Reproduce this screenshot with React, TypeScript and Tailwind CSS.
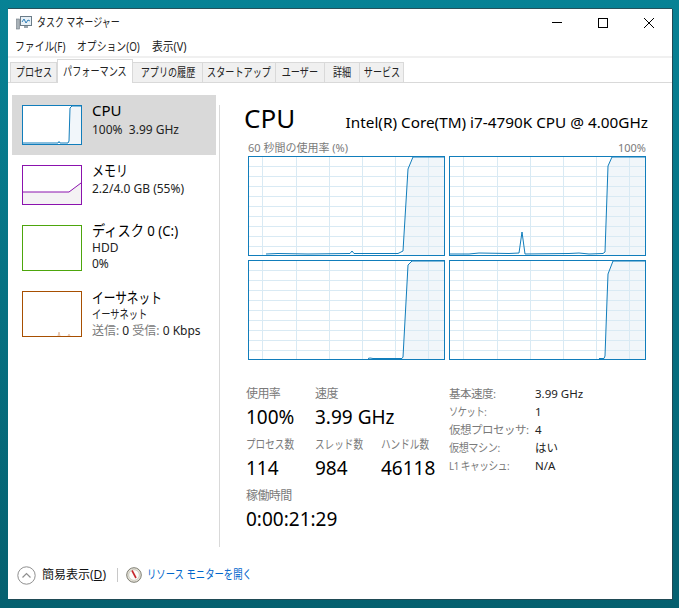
import { ReactNode } from 'react'

const font = { fontFamily: '"Noto Sans", "Noto Sans CJK JP", sans-serif' }

const tabs = [
  { label: 'プロセス', w: 'w-[47px]' },
  { label: 'パフォーマンス', w: 'w-[76px]', active: true },
  { label: 'アプリの履歴', w: 'w-[70px]' },
  { label: 'スタートアップ', w: 'w-[73px]' },
  { label: 'ユーザー', w: 'w-[49px]' },
  { label: '詳細', w: 'w-[35px]' },
  { label: 'サービス', w: 'w-[44px]' },
]

const specs = [
  ['基本速度:', '3.99 GHz', ''],
  ['ソケット:', '1', 'scale-x-[0.8]'],
  ['仮想プロセッサ:', '4', ''],
  ['仮想マシン:', 'はい', 'scale-x-[0.88]'],
  ['L1 キャッシュ:', 'N/A', 'scale-x-[0.84]'],
]

const hLines = [10, 20, 30, 40, 50, 60, 70, 80, 90]
const vLines = [14, 48, 81, 114, 147, 180]

// kana in the original UI font is much narrower than Noto's
function Narrow({ children, className = 'scale-x-[0.8]' }: { children: ReactNode; className?: string }) {
  return <span className={`inline-block origin-left whitespace-nowrap ${className}`}>{children}</span>
}

function CpuGraph({ line, fill }: { line: string; fill: string }) {
  return (
    <svg width="197" height="100" viewBox="0 0 197 100" className="block">
      <rect x="0.5" y="0.5" width="196" height="99" fill="#ffffff" />
      <polygon points={fill} fill="#f1f6fa" />
      {hLines.map(y => <line key={y} x1="1" x2="196" y1={y + 0.5} y2={y + 0.5} stroke="#d9eaf4" />)}
      {vLines.map(x => <line key={x} x1={x + 0.5} x2={x + 0.5} y1="1" y2="99" stroke="#d9eaf4" />)}
      <polyline points={line} fill="none" stroke="#117dbb" strokeWidth="1" />
      <rect x="0.5" y="0.5" width="196" height="99" fill="none" stroke="#117dbb" />
    </svg>
  )
}

function Thumb({ color, h, children }: { color: string; h: number; children?: ReactNode }) {
  return (
    <svg width="60" height={h} viewBox={`0 0 60 ${h}`} className="block shrink-0">
      <rect x="0.5" y="0.5" width="59" height={h - 1} fill="#ffffff" />
      {children}
      <rect x="0.5" y="0.5" width="59" height={h - 1} fill="none" stroke={color} />
    </svg>
  )
}

function Stat({ label, value, w, narrow }: { label: string; value: string; w: string; narrow?: boolean }) {
  return (
    <div className={w}>
      <div className="text-[12px] leading-[16px] text-[#7a7a7a]">
        {narrow ? <Narrow className="scale-x-[0.8]">{label}</Narrow> : <span className="tracking-[-0.6px]">{label}</span>}
      </div>
      <div className="text-[19px] leading-[26px] mt-[2px] text-black whitespace-nowrap">{value}</div>
    </div>
  )
}

export default function App() {
  return (
    <div
      style={font}
      className="w-[679px] h-[608px] overflow-hidden pl-2 pt-2 bg-gradient-to-b from-[#078295] to-[#05606f]"
    >
      <div className="w-[664px] h-[591px] bg-white flex flex-col border-t border-[#27505a] shadow-[1px_1px_0_#1f4a55]">
        {/* Title bar */}
        <div className="h-[29px] flex items-center shrink-0">
          <svg width="16" height="15" viewBox="0 0 16 15" className="ml-2 shrink-0 mb-[2px]">
            <rect x="4.5" y="1.5" width="11" height="9" fill="#e8f1f7" stroke="#6b7c88" />
            <polyline points="6,7 8,4 10,8 12,5 14,6" fill="none" stroke="#2f7fb8" />
            <rect x="8" y="11" width="4" height="2" fill="#9aa5ad" />
            <rect x="0.5" y="4" width="3" height="10" fill="#a9b2b8" stroke="#6e7a82" strokeWidth="0.6" />
          </svg>
          <span className="ml-[5px] text-[12px] text-[#222] mb-[2px]">
            <Narrow className="scale-x-[0.75]">タスク マネージャー</Narrow>
          </span>
          <div className="ml-auto flex items-center mb-[2px]">
            <div className="w-[46px] flex justify-center"><div className="w-[10px] h-px bg-black" /></div>
            <div className="w-[46px] flex justify-center"><div className="w-[10px] h-[10px] border border-black" /></div>
            <div className="w-[46px] flex justify-center">
              <svg width="10" height="10" viewBox="0 0 10 10"><path d="M0 0L10 10M10 0L0 10" stroke="#000" strokeWidth="1" /></svg>
            </div>
          </div>
        </div>

        {/* Menu */}
        <div className="h-[18px] flex items-center text-[12px] text-[#222] shrink-0 pl-[7px]">
          <span className="w-[62px]"><Narrow className="scale-x-[0.82]">ファイル(F)</Narrow></span>
          <span className="w-[75px]"><Narrow className="scale-x-[0.82]">オプション(O)</Narrow></span>
          <span><Narrow className="scale-x-[0.9]">表示(V)</Narrow></span>
        </div>
        <div className="h-[2px] bg-[#f0f0f0] shrink-0" />

        {/* Tabs */}
        <div className="h-[25px] flex items-end pl-[2px] border-b border-[#d9d9d9] shrink-0 text-[12px] text-[#222]">
          {tabs.map(t =>
            t.active ? (
              <div key={t.label} className={`${t.w} h-[24px] -mb-px bg-white border border-b-0 border-[#d9d9d9] flex items-center justify-center`}>
                <span className="inline-block scale-x-[0.76] whitespace-nowrap">{t.label}</span>
              </div>
            ) : (
              <div key={t.label} className={`${t.w} h-[20px] bg-[#f0f0f0] border border-b-0 border-l-0 first:border-l border-[#d9d9d9] flex items-center justify-center`}>
                <span className="inline-block scale-x-[0.76] whitespace-nowrap">{t.label}</span>
              </div>
            )
          )}
        </div>

        {/* Body */}
        <div className="flex flex-1 pt-3 min-h-0">
          {/* Sidebar */}
          <div className="w-[211px] pl-1 shrink-0">
            <div className="w-[204px] h-[60px] bg-[#d9d9d9] flex pl-[10px] pt-[10px]">
              <Thumb color="#117dbb" h={40}>
                <polygon points="47,39 48,3 59,1 59,39" fill="#f1f6fa" />
                <polyline points="1,38 36,38 37,36.5 38,38 46,38 47,36 48,3 50,1 59,1" fill="none" stroke="#117dbb" />
              </Thumb>
              <div className="ml-[10px] -mt-[5px]">
                <div className="text-[15px] leading-[20px] text-black">CPU</div>
                <div className="text-[12px] leading-[16px] mt-[2px] text-[#222] whitespace-nowrap">100%&nbsp; 3.99 GHz</div>
              </div>
            </div>
            <div className="h-[60px] flex pl-[10px] pt-[10px]">
              <Thumb color="#8b12ae" h={40}>
                <polygon points="1,27 47,27 59,18 59,39 1,39" fill="#f4f2f4" />
                <polyline points="1,27 47,27 59,18" fill="none" stroke="#8b12ae" />
              </Thumb>
              <div className="ml-[10px] -mt-[5px]">
                <div className="text-[15px] leading-[20px] text-black"><Narrow>メモリ</Narrow></div>
                <div className="text-[12px] leading-[16px] mt-px text-[#222] whitespace-nowrap">2.2/4.0 GB (55%)</div>
              </div>
            </div>
            <div className="h-[66px] flex pl-[10px] pt-[10px]">
              <Thumb color="#4da60c" h={46} />
              <div className="ml-[10px] -mt-[5px]">
                <div className="text-[15px] leading-[20px] text-black"><Narrow className="scale-x-[0.88]">ディスク 0 (C:)</Narrow></div>
                <div className="text-[12px] leading-[16px] text-[#222]">HDD</div>
                <div className="text-[12px] leading-[16px] text-[#222]">0%</div>
              </div>
            </div>
            <div className="h-[66px] flex pl-[10px] pt-[10px]">
              <Thumb color="#a74f01" h={46}>
                <polyline points="36,45 37,41 38,45" fill="#f3dccb" stroke="#e7c4ab" />
                <polyline points="46,45 47,43 48,45" fill="#f3dccb" stroke="#e7c4ab" />
              </Thumb>
              <div className="ml-[10px] -mt-[4px]">
                <div className="text-[15px] leading-[20px] text-black"><Narrow className="scale-x-[0.78]">イーサネット</Narrow></div>
                <div className="text-[12px] leading-[16px] text-[#222]"><Narrow className="scale-x-[0.77]">イーサネット</Narrow></div>
                <div className="text-[12px] leading-[16px] text-[#7a7a7a] whitespace-nowrap">
                  送信: <span className="text-[#222]">0</span> 受信: <span className="text-[#222]">0 Kbps</span>
                </div>
              </div>
            </div>
          </div>

          {/* Detail pane */}
          <div className="flex-1 h-[442px] mt-[10px] border-l border-[#d9d9d9] pl-[25px] pr-[24px] min-w-0">
            <div className="flex items-end justify-between h-[26px]">
              <span className="text-[26px] leading-[26px] text-black -ml-px">CPU</span>
              <span className="text-[15.3px] leading-[20px] text-black whitespace-nowrap -mb-px">Intel(R) Core(TM) i7-4790K CPU @ 4.00GHz</span>
            </div>
            <div className="flex justify-between text-[11px] leading-[14px] text-[#7a7a7a] mt-[10px] pl-[3px] pr-[2px]">
              <span>60 秒間の使用率 (%)</span>
              <span>100%</span>
            </div>
            <div className="grid grid-cols-[197px_197px] gap-[4px] mt-px ml-[3px]">
              <CpuGraph
                fill="155,99 160,13 166,1 196,1 196,99"
                line="18,98 30,97.5 60,98 102,97.5 104,95 106,97.5 150,97.5 155,95 160,13 165,1 196,1"
              />
              <CpuGraph
                fill="156,99 159,10 163,1 196,1 196,99"
                line="1,98 20,98 30,97 60,97.5 70,97 73,76 76,98 120,97.5 130,97 140,98 154,97.5 156,96 159,10 163,1 196,1"
              />
              <CpuGraph
                fill="155,99 160,5 164,1 196,1 196,99"
                line="120,98.5 122,98 125,98.5 154,98.5 155,97 160,5 164,1 196,1"
              />
              <CpuGraph
                fill="156,99 159,14 164,1 196,1 196,99"
                line="150,98.5 155,98.5 156,96 158,40 159,14 164,1 196,1"
              />
            </div>

            <div className="flex mt-[26px] ml-px">
              <div className="w-[203px]">
                <div className="flex">
                  <Stat label="使用率" value="100%" w="w-[69px]" />
                  <Stat label="速度" value="3.99 GHz" w="w-[120px]" />
                </div>
                <div className="flex mt-[7px]">
                  <Stat label="プロセス数" value="114" w="w-[69px]" narrow />
                  <Stat label="スレッド数" value="984" w="w-[66px]" narrow />
                  <Stat label="ハンドル数" value="46118" w="w-[60px]" narrow />
                </div>
                <div className="mt-[7px]">
                  <Stat label="稼働時間" value="0:00:21:29" w="w-[120px]" />
                </div>
              </div>
              <div className="grid grid-cols-[86px_auto] auto-rows-[18px] text-[11.5px] items-center -mt-px h-fit">
                {specs.map(([k, v, scale]) => (
                  <div key={k} className="contents">
                    <span className="text-[#7a7a7a] whitespace-nowrap tracking-[-0.5px]">
                      <Narrow className={scale}>{k}</Narrow>
                    </span>
                    <span className="text-[#222] whitespace-nowrap">{v}</span>
                  </div>
                ))}
              </div>
            </div>
          </div>
        </div>

        {/* Footer */}
        <div className="h-[52px] flex items-center pl-[9px] pt-[4px] shrink-0 text-[12px]">
          <svg width="19" height="19" viewBox="0 0 19 19" className="shrink-0">
            <circle cx="9.5" cy="9.5" r="8.7" fill="#fff" stroke="#8f8f8f" />
            <path d="M5.5 11.5L9.5 7.5L13.5 11.5" fill="none" stroke="#8f8f8f" strokeWidth="1.2" />
          </svg>
          <span className="ml-[6px] w-[72px] text-[#111] whitespace-nowrap">簡易表示(<span className="underline">D</span>)</span>
          <div className="w-px h-[14px] bg-[#c8c8c8] ml-[3px]" />
          <svg width="16" height="16" viewBox="0 0 16 16" className="ml-2 shrink-0">
            <circle cx="8" cy="8" r="7.3" fill="#e6e2d8" stroke="#7d7d72" />
            <circle cx="8" cy="8" r="5.3" fill="#fbfbf8" stroke="#b5b5aa" strokeWidth="0.6" />
            <path d="M6 3.5L10 11" stroke="#c6252b" strokeWidth="1.6" />
          </svg>
          <span className="ml-[5px] text-[#0066cc]"><Narrow className="scale-x-[0.78]">リソース モニターを開く</Narrow></span>
        </div>
      </div>
    </div>
  )
}
